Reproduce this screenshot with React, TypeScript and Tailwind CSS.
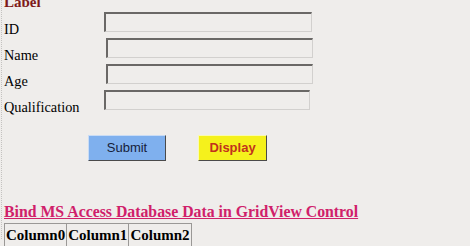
import React from "react";

const rows = [
  { label: "ID", ml: "ml-0", w: "w-[208px]" },
  { label: "Name", ml: "ml-[2px]", w: "w-[207px]" },
  { label: "Age", ml: "ml-[2px]", w: "w-[207px]" },
  { label: "Qualification", ml: "ml-0", w: "w-[206px]" },
];

export default function App() {
  return (
    <div className="w-[470px] h-[246px] overflow-hidden bg-[#efedeb] font-['Liberation_Serif',serif] text-black">
      <div className="ml-px h-full border-l border-dotted border-[#c4c2c0] pl-[2px]">
        <div className="mt-[-7px] text-[15px] leading-[18px] font-bold text-[#7e1a1a]">Label</div>
        <div className="mt-px flex flex-col">
          {rows.map((r) => (
            <div key={r.label} className="flex h-[26px] items-start">
              <div className="w-[100px] pt-[7px] text-[14.3px] leading-[20px]">{r.label}</div>
              <div
                className={`${r.ml} ${r.w} h-[20px] border-t-2 border-l-2 border-r border-b border-t-[#6a6866] border-l-[#6a6866] border-r-[#d2d0ce] border-b-[#d2d0ce] bg-[#efedeb]`}
              />
            </div>
          ))}
        </div>
        <div className="mt-[19px] flex items-start">
          <button className="ml-[84px] h-[26px] w-[78px] border border-t-[#c9dcf5] border-l-[#c9dcf5] border-r-[#4a4a4a] border-b-[#4a4a4a] bg-[#7fb0ee] font-['Liberation_Sans',sans-serif] text-[13px] text-[#16213a]">
            Submit
          </button>
          <button className="ml-[32px] h-[26px] w-[69px] border border-t-[#fafab0] border-l-[#fafab0] border-r-[#4a4a4a] border-b-[#4a4a4a] bg-[#f5f11c] font-['Liberation_Sans',sans-serif] text-[13px] font-bold text-[#c2321c]">
            Display
          </button>
        </div>
        <div className="mt-[42px] text-[15.8px] leading-[18px] font-bold text-[#d0206a] underline">
          Bind MS Access Database Data in GridView Control
        </div>
        <table className="mt-[2px] border-collapse border border-[#8a8886]">
          <tbody>
            <tr>
              {["Column0", "Column1", "Column2"].map((c) => (
                <td
                  key={c}
                  className="h-[23px] border border-[#9a9896] px-[1px] text-[15px] leading-[20px] font-bold"
                >
                  {c}
                </td>
              ))}
            </tr>
          </tbody>
        </table>
      </div>
    </div>
  );
}
